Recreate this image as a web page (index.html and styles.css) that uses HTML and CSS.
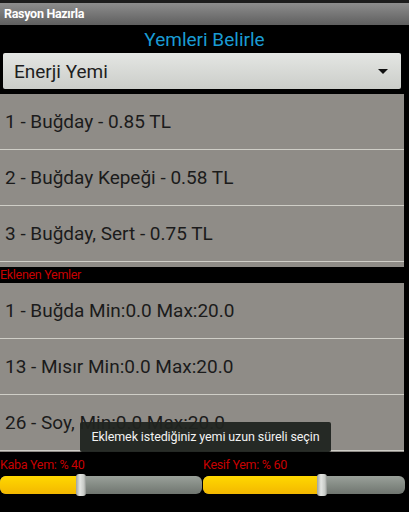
FILE: index.html
```html
<!DOCTYPE html>
<html lang="tr">
<head>
  <meta charset="UTF-8">
  <meta name="viewport" content="width=device-width, initial-scale=1.0">
  <title>Rasyon Hazırla</title>
  <link rel="stylesheet" href="styles.css">
</head>
<body>
  <div class="screen">
    <div class="titlebar">Rasyon Hazırla</div>

    <h2 class="heading">Yemleri Belirle</h2>

    <div class="spinner">
      <span>Enerji Yemi</span>
      <span class="arrow"></span>
    </div>

    <!-- Yem listesi -->
    <ul class="list feeds">
      <li>1 - Buğday - 0.85 TL</li>
      <li>2 - Buğday Kepeği - 0.58 TL</li>
      <li>3 - Buğday, Sert - 0.75 TL</li>
    </ul>

    <div class="caption">Eklenen Yemler</div>

    <!-- Eklenen yemler -->
    <ul class="list added">
      <li>1 - Buğda Min:0.0 Max:20.0</li>
      <li>13 - Mısır Min:0.0 Max:20.0</li>
      <li>26 - Soy, Min:0.0 Max:20.0</li>
    </ul>

    <div class="ratios">
      <div class="ratio">
        <div class="caption">Kaba Yem: % 40</div>
        <div class="slider">
          <div class="fill" style="width: 40%"></div>
          <div class="thumb" style="left: 40%"></div>
        </div>
      </div>
      <div class="ratio">
        <div class="caption">Kesif Yem: % 60</div>
        <div class="slider">
          <div class="fill" style="width: 59%"></div>
          <div class="thumb" style="left: 59%"></div>
        </div>
      </div>
    </div>

    <div class="toast">Eklemek istediğiniz yemi uzun süreli seçin</div>
  </div>
</body>
</html>
```

FILE: styles.css
```css
body {
  margin: 0;
  background: #000;
  font-family: Roboto, "Noto Sans", sans-serif;
  color: #1b1b1b;
}
.screen {
  position: relative;
  width: 409px;
  height: 512px;
  overflow: hidden;
  display: flex;
  flex-direction: column;
}
.titlebar {
  height: 22px;
  border-top: 3px solid #1c1c1c;
  background: linear-gradient(#8d8d8d, #5f5f5f);
  color: #fff;
  font-weight: bold;
  font-size: 12.5px;
  line-height: 22px;
  padding-left: 4px;
  letter-spacing: -0.3px;
}
.heading {
  margin: 0;
  height: 28px;
  line-height: 29px;
  text-align: center;
  font-size: 19px;
  font-weight: normal;
  color: #1a9bd3;
}
.spinner {
  margin: 0 8px 0 3px;
  height: 36px;
  border-radius: 2px;
  background: linear-gradient(#e4e6e3, #cbcdc9);
  display: flex;
  align-items: center;
  justify-content: space-between;
  padding: 0 13px 0 11px;
  font-size: 19px;
  color: #1e1e1e;
}
.arrow {
  width: 0;
  height: 0;
  border-left: 5px solid transparent;
  border-right: 5px solid transparent;
  border-top: 5px solid #111;
}
.list {
  list-style: none;
  margin: 0;
  padding: 0;
  width: 404px;
  background: #8f8c87;
  overflow: hidden;
}
.list li {
  height: 55px;
  line-height: 55px;
  padding-left: 5px;
  font-size: 19px;
  border-bottom: 1px solid #cfcec7;
  white-space: nowrap;
}
.feeds {
  margin-top: 5px;
  height: 173px;
}
.added {
  height: 169px;
}
.caption {
  color: #c80000;
  font-size: 12.5px;
  height: 16px;
  line-height: 16px;
  letter-spacing: -0.3px;
}
.ratios {
  display: flex;
  gap: 1px;
  width: 405px;
  margin-top: 3px;
}
.ratio {
  flex: 1;
}
.ratio .caption {
  height: 20px;
  line-height: 20px;
}
.slider {
  position: relative;
  height: 18px;
  margin-top: 1px;
  border-radius: 6px;
  background: linear-gradient(#9aa19a, #6f756f);
}
.fill {
  height: 100%;
  border-radius: 6px 0 0 6px;
  background: linear-gradient(#ffd800, #f3b800);
}
.thumb {
  position: absolute;
  top: -2px;
  width: 10px;
  height: 22px;
  margin-left: -5px;
  border-radius: 3px;
  background: linear-gradient(90deg, #9ea39e, #e3e5e2 40%, #c6c9c5 80%, #8e928e);
}
.toast {
  position: absolute;
  left: 80px;
  top: 422px;
  width: 251px;
  height: 30px;
  line-height: 30px;
  text-align: center;
  background: rgba(32, 36, 32, 0.95);
  border-radius: 2px;
  color: #f2f2f2;
  font-size: 12.5px;
  letter-spacing: -0.1px;
}
```
